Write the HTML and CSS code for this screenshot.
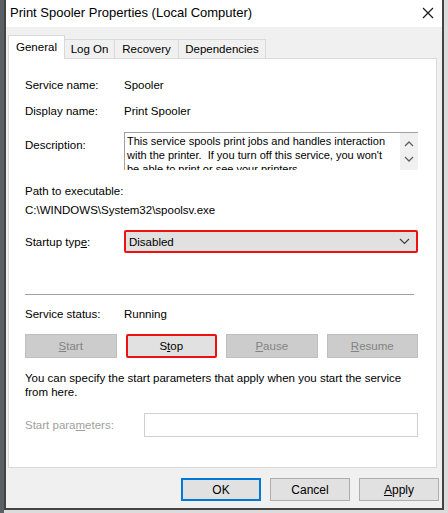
FILE: index.html
```html
<!DOCTYPE html>
<html lang="en">
<head>
    <meta charset="UTF-8">
    <title>Print Spooler Properties (Local Computer)</title>
    <link rel="stylesheet" href="styles.css">
</head>
<body>
    <div class="window">
        <!-- Barra del titolo -->
        <div class="titlebar">
            <span class="title">Print Spooler Properties (Local Computer)</span>
            <svg class="close" width="12" height="12" viewBox="0 0 12 12">
                <path d="M1 1 L11 11 M11 1 L1 11" stroke="#1a1a1a" stroke-width="1.2" fill="none"/>
            </svg>
        </div>

        <div class="client">
            <div class="tabs">
                <div class="tab active">General</div>
                <div class="tab tab-logon">Log On</div>
                <div class="tab tab-recovery">Recovery</div>
                <div class="tab tab-deps">Dependencies</div>
            </div>

            <div class="panel">
                <div class="row">
                    <span class="label">Service name:</span>
                    <span>Spooler</span>
                </div>
                <div class="row row-display">
                    <span class="label">Display name:</span>
                    <span>Print Spooler</span>
                </div>
                <div class="row row-desc">
                    <span class="label label-desc">Description:</span>
                    <div class="desc-box">
                        <div class="desc-text">This service spools print jobs and handles interaction with the printer.&nbsp; If you turn off this service, you won't be able to print or see your printers.</div>
                        <div class="scroll">
                            <svg width="10" height="6" viewBox="0 0 10 6"><path d="M1 5 L5 1 L9 5" stroke="#606060" stroke-width="1.3" fill="none"/></svg>
                            <svg width="10" height="6" viewBox="0 0 10 6"><path d="M1 1 L5 5 L9 1" stroke="#606060" stroke-width="1.3" fill="none"/></svg>
                        </div>
                    </div>
                </div>
                <div class="path-label">Path to executable:</div>
                <div class="path-value">C:\WINDOWS\System32\spoolsv.exe</div>
                <div class="row row-startup">
                    <span class="label">Startup typ<u>e</u>:</span>
                    <div class="select">
                        <span>Disabled</span>
                        <svg width="11" height="7" viewBox="0 0 11 7"><path d="M1 1 L5.5 5.5 L10 1" stroke="#404040" stroke-width="1.2" fill="none"/></svg>
                    </div>
                </div>

                <div class="separator"></div>

                <div class="row row-status">
                    <span class="label">Service status:</span>
                    <span>Running</span>
                </div>
                <div class="service-buttons">
                    <button class="btn disabled"><u>S</u>tart</button>
                    <button class="btn highlight">S<u>t</u>op</button>
                    <button class="btn disabled"><u>P</u>ause</button>
                    <button class="btn disabled"><u>R</u>esume</button>
                </div>
                <p class="hint">You can specify the start parameters that apply when you start the service from here.</p>
                <div class="row row-params">
                    <span class="label label-params">Start para<u>m</u>eters:</span>
                    <div class="params-input"></div>
                </div>
            </div>

            <div class="dialog-buttons">
                <button class="btn dlg default">OK</button>
                <button class="btn dlg">Cancel</button>
                <button class="btn dlg"><u>A</u>pply</button>
            </div>
        </div>
    </div>
</body>
</html>
```

FILE: styles.css
```css
/* Impostazioni generali */
body {
    margin: 0;
    height: 513px;
    overflow: hidden;
    font-family: "Liberation Sans", Arial, sans-serif;
    font-size: 11.5px;
    color: #000;
    background: linear-gradient(to right, #5b5f66 4px, #dcdcdc 4px);
}

.window {
    margin-left: 4px;
    width: 436px;
    height: 508px;
    border-left: 2px solid #444;
    border-right: 2px solid #444;
    border-bottom: 2px solid #444;
    background-color: #f0f0f0;
    display: flex;
    flex-direction: column;
}

.titlebar {
    height: 27px;
    box-sizing: border-box;
    background-color: #fff;
    display: flex;
    align-items: center;
    justify-content: space-between;
    padding: 0 8px 2px 4px;
}

.title {
    font-size: 13px;
}

.client {
    padding-left: 2px;
    padding-right: 5px;
    display: flex;
    flex-direction: column;
}

/* Linguette */
.tabs {
    display: flex;
    align-items: flex-end;
    margin-top: 8px;
    height: 23px;
}

.tab {
    height: 19px;
    line-height: 19px;
    border: 1px solid #d9d9d9;
    border-bottom: none;
    border-left: none;
    text-align: center;
    box-sizing: border-box;
    background-color: #f0f0f0;
}

.tab.active {
    height: 24px;
    line-height: 22px;
    width: 57px;
    border-left: 1px solid #d9d9d9;
    background-color: #fff;
    position: relative;
    top: 1px;
    z-index: 1;
}

.tab-logon { width: 50px; }
.tab-recovery { width: 64px; }
.tab-deps { width: 87px; }

.panel {
    height: 410px;
    box-sizing: border-box;
    border: 1px solid #d9d9d9;
    background-color: #fff;
    padding: 19px 18px 0 16px;
}

.row {
    display: flex;
    align-items: center;
    line-height: 14px;
}

.label {
    width: 99px;
    flex-shrink: 0;
}

.row-display { margin-top: 12px; }

.row-desc {
    margin-top: 14px;
    align-items: flex-start;
}

.label-desc { padding-top: 6px; }

.desc-box {
    flex: 1;
    height: 38px;
    box-sizing: border-box;
    border-top: 1px solid #a0a0a0;
    border-left: 1px solid #a0a0a0;
    display: flex;
    overflow: hidden;
}

.desc-text {
    flex: 1;
    padding: 1px 5px 0 2px;
    font-size: 11px;
    line-height: 14px;
}

.scroll {
    width: 18px;
    flex-shrink: 0;
    background-color: #f0f0f0;
    display: flex;
    flex-direction: column;
    align-items: center;
    justify-content: space-around;
    padding: 3px 0;
}

.path-label {
    margin-top: 14px;
    line-height: 14px;
}

.path-value {
    margin-top: 5px;
    line-height: 14px;
}

.row-startup { margin-top: 13px; }

.select {
    flex: 1;
    height: 23px;
    box-sizing: border-box;
    border: 2px solid #ee1111;
    border-radius: 2px;
    background-color: #e1e1e1;
    display: flex;
    align-items: center;
    justify-content: space-between;
    padding: 0 6px 0 3px;
}

.separator {
    margin-top: 41px;
    margin-right: 4px;
    height: 1px;
    background-color: #a0a0a0;
}

.row-status { margin-top: 12px; }

/* Bottoni del servizio */
.service-buttons {
    display: grid;
    grid-template-columns: repeat(4, 1fr);
    gap: 9px;
    margin-top: 13px;
}

.btn {
    font-family: inherit;
    font-size: inherit;
    height: 24px;
    border: 1px solid #adadad;
    background-color: #e1e1e1;
    color: #000;
    padding: 0;
}

.btn.disabled {
    background-color: #cccccc;
    border-color: #bfbfbf;
    color: #838383;
}

.btn.highlight {
    border: 2px solid #ee1111;
    border-radius: 2px;
}

.hint {
    margin: 13px 0 0 0;
    line-height: 14px;
}

.row-params { margin-top: 14px; }

.label-params {
    width: 119px;
    color: #a0a0a0;
}

.params-input {
    flex: 1;
    height: 24px;
    box-sizing: border-box;
    border: 1px solid #d0d0d0;
}

/* Bottoni del dialogo */
.dialog-buttons {
    display: flex;
    justify-content: flex-end;
    gap: 9px;
    margin-top: 10px;
    margin-right: -2px;
}

.btn.dlg {
    width: 80px;
    height: 23px;
    font-size: 12px;
}

.btn.default {
    border: 2px solid #0078d7;
}
```
